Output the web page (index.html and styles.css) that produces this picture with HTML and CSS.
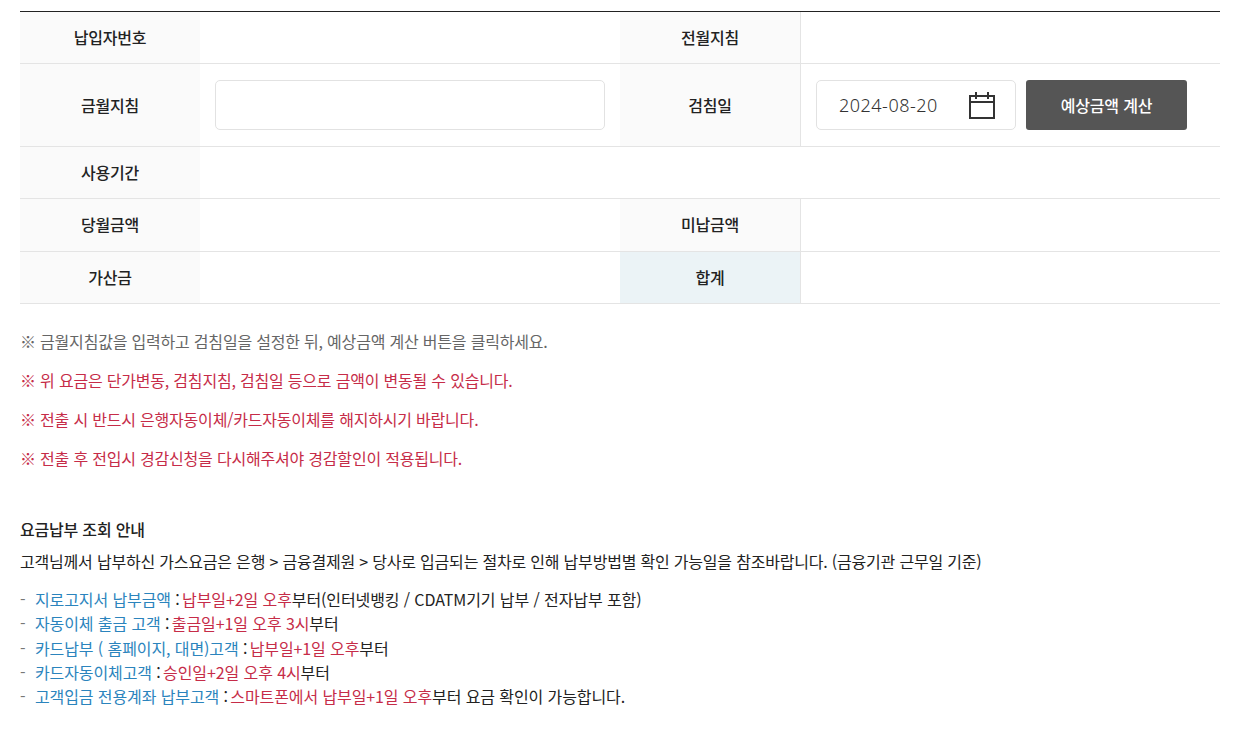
FILE: index.html
```html
<!DOCTYPE html>
<html lang="ko">
<head>
    <meta charset="UTF-8">
    <meta name="viewport" content="width=device-width, initial-scale=1.0">
    <title>예상금액 계산</title>
    <link rel="stylesheet" href="styles.css">
</head>
<body>
    <table class="bill-table">
        <colgroup>
            <col class="col-head">
            <col class="col-wide">
            <col class="col-head-line">
            <col>
        </colgroup>
        <tr class="row">
            <th>납입자번호</th>
            <td></td>
            <th class="head-line">전월지침</th>
            <td></td>
        </tr>
        <tr class="row-form">
            <th>금월지침</th>
            <td><input class="text-input" type="text"></td>
            <th class="head-line">검침일</th>
            <td>
                <div class="date-group">
                    <div class="date-input">
                        <span class="date-value">2024-08-20</span>
                        <svg class="date-icon" width="26" height="27" viewBox="0 0 26 27" fill="none" stroke="#333" stroke-width="2">
                            <rect x="1" y="4" width="24" height="22"/>
                            <path d="M1 10H25M7 0V7M19 0V7"/>
                        </svg>
                    </div>
                    <button class="calc-btn" type="button">예상금액 계산</button>
                </div>
            </td>
        </tr>
        <tr class="row">
            <th>사용기간</th>
            <td colspan="3"></td>
        </tr>
        <tr class="row row-tall">
            <th>당월금액</th>
            <td></td>
            <th class="head-line">미납금액</th>
            <td></td>
        </tr>
        <tr class="row">
            <th>가산금</th>
            <td></td>
            <th class="head-line head-total">합계</th>
            <td></td>
        </tr>
    </table>

    <div class="notes">
        <p>※ 금월지침값을 입력하고 검침일을 설정한 뒤, 예상금액 계산 버튼을 클릭하세요.</p>
        <p class="red">※ 위 요금은 단가변동, 검침지침, 검침일 등으로 금액이 변동될 수 있습니다.</p>
        <p class="red">※ 전출 시 반드시 은행자동이체/카드자동이체를 해지하시기 바랍니다.</p>
        <p class="red">※ 전출 후 전입시 경감신청을 다시해주셔야 경감할인이 적용됩니다.</p>
    </div>

    <div class="guide">
        <h4>요금납부 조회 안내</h4>
        <p>고객님께서 납부하신 가스요금은 은행 &gt; 금융결제원 &gt; 당사로 입금되는 절차로 인해 납부방법별 확인 가능일을 참조바랍니다. (금융기관 근무일 기준)</p>
        <ul>
            <li><span class="blue">지로고지서 납부금액</span><span class="sep"> : </span><span class="red">납부일+2일 오후</span>부터(인터넷뱅킹 / CDATM기기 납부 / 전자납부 포함)</li>
            <li><span class="blue">자동이체 출금 고객</span><span class="sep"> : </span><span class="red">출금일+1일 오후 3시</span>부터</li>
            <li><span class="blue">카드납부 ( 홈페이지, 대면)고객</span><span class="sep"> : </span><span class="red">납부일+1일 오후</span>부터</li>
            <li><span class="blue">카드자동이체고객</span><span class="sep"> : </span><span class="red">승인일+2일 오후 4시</span>부터</li>
            <li><span class="blue">고객입금 전용계좌 납부고객</span><span class="sep"> : </span><span class="red">스마트폰에서 납부일+1일 오후</span>부터 요금 확인이 가능합니다.</li>
        </ul>
    </div>
</body>
</html>
```

FILE: styles.css
```css
/* Base */
body {
    margin: 0;
    padding: 11px 22px 0 20px;
    background: #fff;
    color: #222;
    font-family: "Noto Sans CJK KR", "Noto Sans", sans-serif;
    font-size: 16px;
    letter-spacing: -0.2px;
}

/* Table */
.bill-table {
    width: 1200px;
    border-collapse: separate;
    border-spacing: 0;
    border-top: 1px solid #222;
    table-layout: fixed;
}

.col-head {
    width: 180px;
}

.col-wide {
    width: 420px;
}

.col-head-line {
    width: 181px;
}

.bill-table th,
.bill-table td {
    padding: 0;
    border-bottom: 1px solid #e4e4e4;
}

.bill-table th {
    background: #fafafa;
    color: #222;
    font-size: 16px;
    font-weight: 500;
    text-align: center;
}

.row {
    height: 52px;
}

.bill-table .row th {
    padding-bottom: 2px;
}

.row-tall {
    height: 53px;
}

.row-form {
    height: 83px;
}

.bill-table .head-line {
    border-right: 1px solid #e4e4e4;
}

.bill-table .head-total {
    background: #ebf3f6;
}

.text-input {
    display: block;
    box-sizing: border-box;
    width: 390px;
    height: 50px;
    margin-left: 15px;
    border: 1px solid #e2e2e2;
    border-radius: 5px;
    background: #fff;
}

/* Date + button */
.date-group {
    display: flex;
    gap: 10px;
    padding-left: 15px;
}

.date-input {
    box-sizing: border-box;
    width: 200px;
    height: 50px;
    display: flex;
    align-items: center;
    justify-content: space-between;
    padding: 0 20px 0 22px;
    border: 1px solid #e2e2e2;
    border-radius: 5px;
    color: #333;
    font-family: "Noto Sans", sans-serif;
    font-size: 18px;
    font-weight: 300;
    letter-spacing: 0.5px;
}

.calc-btn {
    width: 161px;
    height: 50px;
    border: none;
    border-radius: 3px;
    background: #555;
    color: #fff;
    font-family: inherit;
    font-size: 16px;
    font-weight: 500;
    letter-spacing: -0.2px;
}

/* Notes */
.notes {
    margin-top: 24px;
    color: #666;
}

.notes p {
    margin: 0;
    height: 39px;
    line-height: 26px;
}

.red {
    color: #c62c48;
}

.blue {
    color: #2b84bd;
}

/* Guide */
.guide {
    margin-top: 33px;
}

.guide h4 {
    margin: 0;
    font-size: 16px;
    font-weight: 500;
    line-height: 24px;
}

.guide p {
    margin: 8px 0 14px;
    line-height: 24px;
}

.guide ul {
    margin: 0;
    padding: 0;
    list-style: none;
}

.guide li {
    position: relative;
    padding-left: 15px;
    line-height: 24.25px;
    letter-spacing: -0.1px;
}

.guide li::before {
    content: "-";
    position: absolute;
    left: 0;
    color: #777;
}

.sep {
    margin-right: -2px;
}
```
